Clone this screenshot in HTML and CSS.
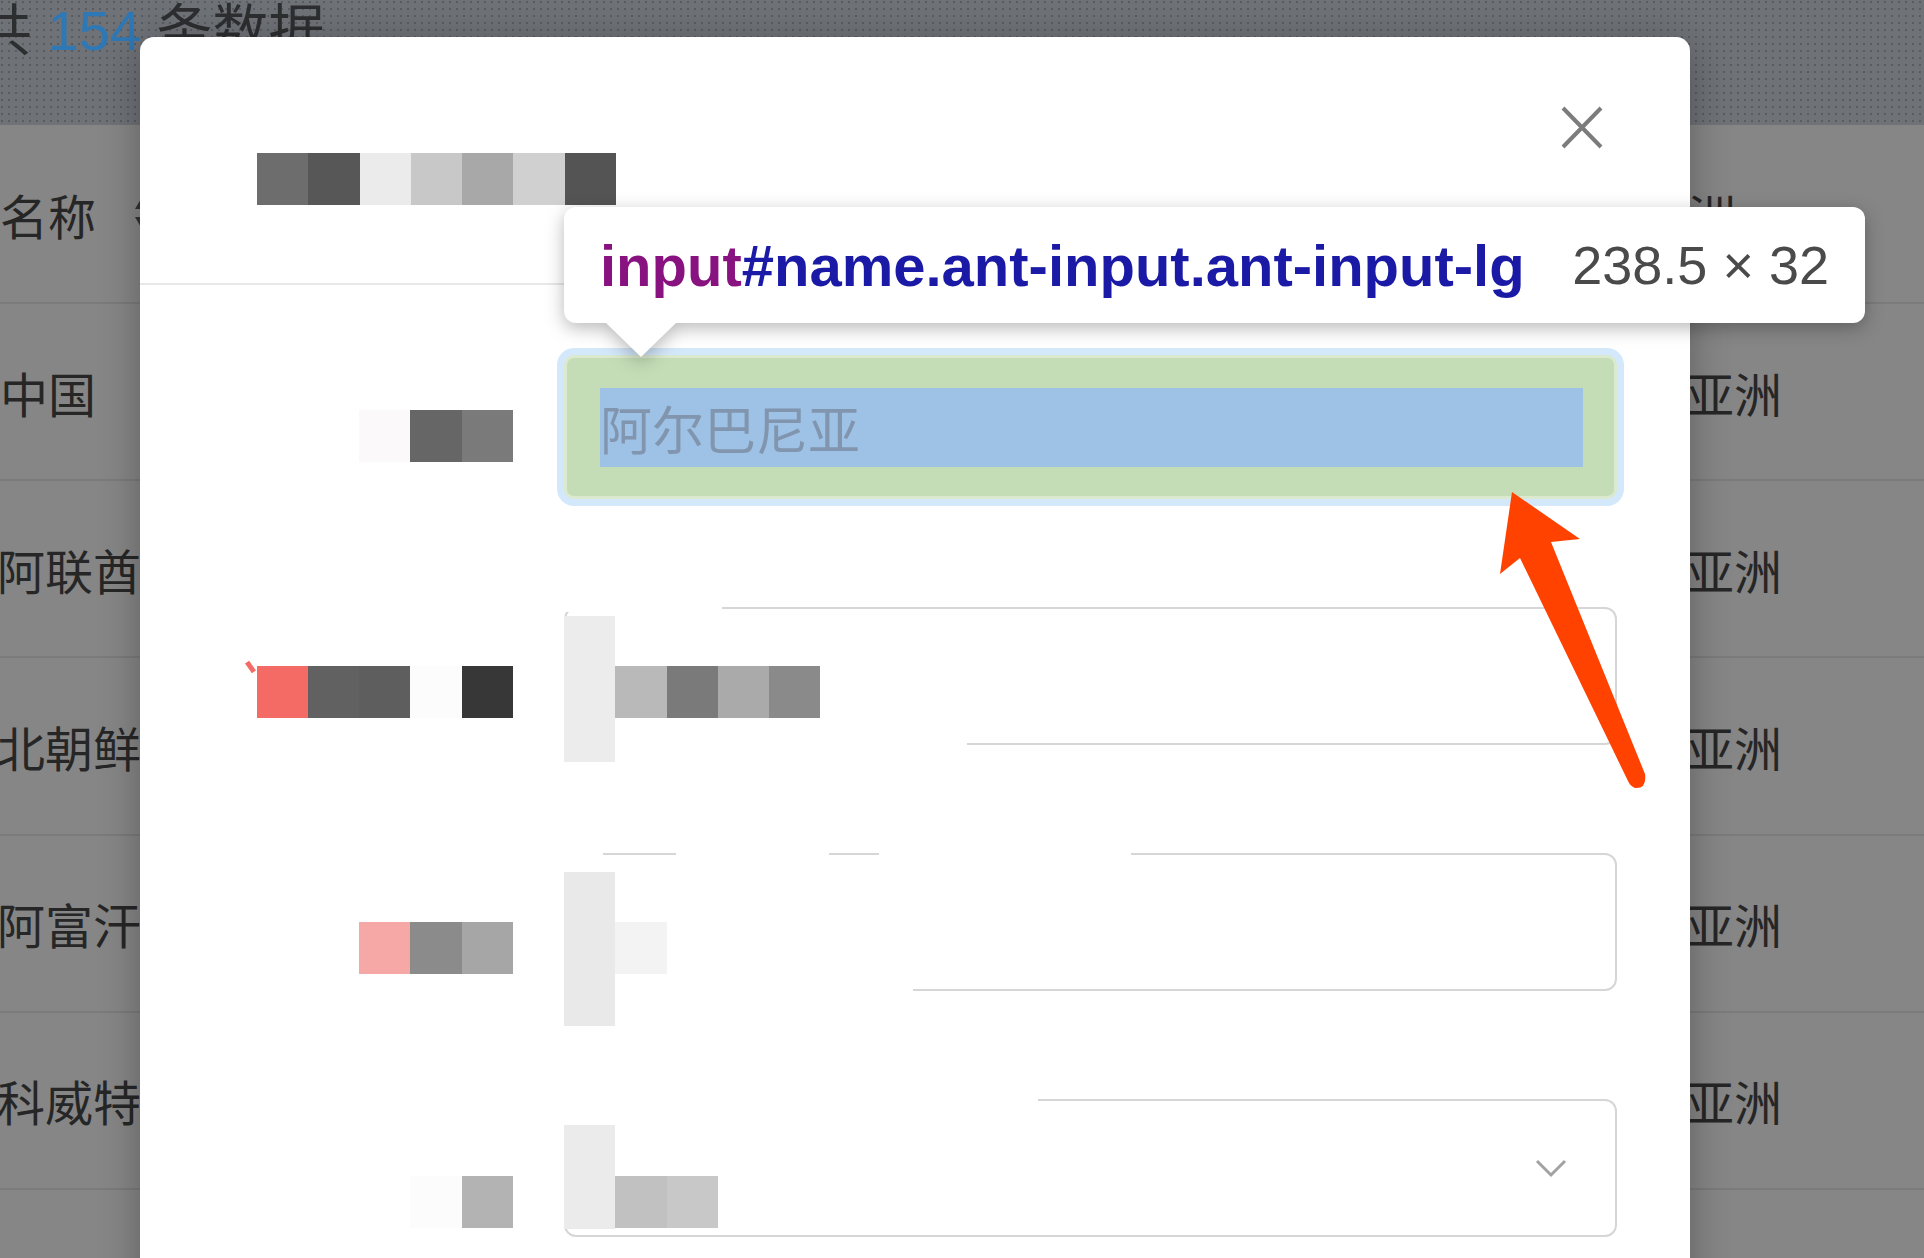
FILE: index.html
```html
<!DOCTYPE html>
<html lang="zh-CN">
<head>
<meta charset="utf-8">
<title>Modal form</title>
<link rel="stylesheet" href="styles.css">
</head>
<body>
<div class="page">
  <div class="topbar"><div class="count">共 <span class="num">154</span> 条数据</div></div>
  <div class="table">
    <div class="tr th">
      <div class="td name">名称<svg class="sorter" width="16" height="38" viewBox="0 0 16 38"><path d="M8 2 L15 14 L1 14 Z" fill="#333"/><path d="M1 22 L15 22 L8 34 Z" fill="#333"/></svg></div>
      <div class="td cont">大洲<span class="dot"></span></div>
    </div>
    <div class="tr"><div class="td name">中国</div><div class="td cont">亚洲</div></div>
    <div class="tr"><div class="td name shift">阿联酋</div><div class="td cont">亚洲</div></div>
    <div class="tr"><div class="td name shift">北朝鲜</div><div class="td cont">亚洲</div></div>
    <div class="tr"><div class="td name shift">阿富汗</div><div class="td cont">亚洲</div></div>
    <div class="tr"><div class="td name shift">科威特</div><div class="td cont">亚洲</div></div>
    <div class="tr"><div class="td name shift">阿曼</div><div class="td cont">亚洲</div></div>
  </div>
</div>

<div class="modal">
  <div class="modal-head">
    <div class="title">
      <span class="px g6d"></span><span class="px g57"></span><span class="px geb"></span><span class="px gc8"></span><span class="px ga8"></span><span class="px gd0"></span><span class="px g54"></span>
    </div>
    <svg class="close" width="44" height="45" viewBox="0 0 44 45"><path d="M3 3 L41 42 M41 3 L3 42" stroke="#7c7c7c" stroke-width="4" fill="none"/></svg>
  </div>
  <div class="modal-body">
    <div class="frow r1">
      <div class="label"><span class="px gfa"></span><span class="px g66"></span><span class="px g7a"></span></div>
      <div class="field">
        <div class="input focus"><div class="content">阿尔巴尼亚</div></div>
      </div>
    </div>
    <div class="frow r2">
      <div class="label"><span class="px red"></span><span class="px g61"></span><span class="px g5f"></span><span class="px gfc"></span><span class="px g37"></span></div>
      <div class="field">
        <div class="input"></div>
        <span class="ov cover c1"></span>
        <span class="ov cover c2"></span>
        <span class="ov vblock"></span>
        <span class="ov blocks"><span class="px gb9"></span><span class="px g7a"></span><span class="px gaa"></span><span class="px g8a"></span></span>
      </div>
    </div>
    <div class="frow r3">
      <div class="label"><span class="px pink"></span><span class="px g8b"></span><span class="px ga6"></span></div>
      <div class="field">
        <div class="input"></div>
        <span class="ov cover c1"></span>
        <span class="ov cover c2"></span>
        <span class="ov cover c3"></span>
        <span class="ov cover c4"></span>
        <span class="ov cover c5"></span>
        <span class="ov vblock"></span>
        <span class="ov blocks"><span class="px gf3"></span></span>
      </div>
    </div>
    <div class="frow r4">
      <div class="label"><span class="px gfc"></span><span class="px gb3"></span></div>
      <div class="field">
        <div class="input select">
          <svg class="chev" width="32" height="20" viewBox="0 0 32 20"><path d="M2 3 L16 17 L30 3" stroke="#a2a2a2" stroke-width="3" fill="none"/></svg>
        </div>
        <span class="ov cover c1"></span>
        <span class="ov cover c4"></span>
        <span class="ov vblock"></span>
        <span class="ov blocks"><span class="px gc1"></span><span class="px gc8"></span></span>
      </div>
    </div>
  </div>
</div>

<div class="tip">
  <span class="sel"><span class="tag">input</span>#name.ant-input.ant-input-lg</span>
  <span class="dim">238.5 × 32</span>
</div>

<svg class="annot" width="1924" height="1258" viewBox="0 0 1924 1258">
  <path d="M1512 492 L1580 539 L1551 542 L1645 774 Q1647 789 1635 788 Q1630 786 1628 781 L1520 558 L1500 574 Z" fill="#ff4200"/>
</svg>
</body>
</html>
```
FILE: styles.css
```css
* { box-sizing: border-box; }
html, body { margin: 0; padding: 0; }
body {
  width: 1924px;
  height: 1258px;
  overflow: hidden;
  position: relative;
  background: #868686;
  font-family: "Liberation Sans", "Noto Sans CJK SC", sans-serif;
}

/* ---------- page under the mask ---------- */
.topbar {
  height: 125px;
  background-color: #6f7277;
  background-image: radial-gradient(circle at 2px 2px, rgba(40, 42, 46, 0.3) 1px, transparent 1.6px);
  background-size: 7px 7px;
  overflow: hidden;
}
.count {
  font-size: 56px;
  line-height: 56px;
  padding-top: 3px;
  margin-left: -24px;
  color: #2d2e30;
  white-space: nowrap;
}
.count .num { color: #2f78b6; }

.tr {
  display: flex;
  align-items: center;
  height: 177.2px;
  border-bottom: 2px solid #7b7b7b;
  font-family: "Noto Sans CJK SC", sans-serif;
  font-size: 48px;
  line-height: 1;
  color: #262626;
  white-space: nowrap;
}
.tr.th { height: 179px; }
.td.name {
  width: 1686px;
  flex: none;
  display: flex;
  align-items: center;
}
.td.name.shift { margin-left: -3px; width: 1689px; }
.td.cont { display: flex; align-items: center; }
.th .cont { margin-left: -46px; }
.sorter { margin-left: 38px; flex: none; }
.dot {
  display: block;
  width: 8px;
  height: 8px;
  margin-left: 46px;
  margin-top: 14px;
  border-radius: 50%;
  background: #333;
}

/* ---------- modal ---------- */
.modal {
  position: absolute;
  left: 140px;
  top: 37px;
  width: 1550px;
  height: 1260px;
  background: #fff;
  border-radius: 14px;
  box-shadow: 0 8px 40px rgba(0, 0, 0, 0.3);
}
.modal-head {
  height: 248px;
  border-bottom: 2px solid #e8e8e8;
  display: flex;
  justify-content: space-between;
  align-items: flex-start;
  padding-left: 117px;
  padding-right: 86px;
}
.title { display: flex; margin-top: 116px; }
.close { margin-top: 68px; flex: none; }

.px { display: block; width: 51.3px; height: 52px; flex: none; }
.g6d { background: #6d6d6d; }
.g57 { background: #575757; }
.geb { background: #ebebeb; }
.gc8 { background: #c8c8c8; }
.ga8 { background: #a8a8a8; }
.gd0 { background: #d0d0d0; }
.g54 { background: #545454; }
.gfa { background: #fbf9f9; }
.g66 { background: #666666; }
.g7a { background: #7a7a7a; }
.g61 { background: #616161; }
.g5f { background: #5e5e5e; }
.gfc { background: #fcfcfc; }
.g37 { background: #373737; }
.gb9 { background: #b9b9b9; }
.gaa { background: #aaaaaa; }
.g8a { background: #8a8a8a; }
.g8b { background: #8b8b8b; }
.ga6 { background: #a6a6a6; }
.gf3 { background: #f3f3f3; }
.gb3 { background: #b3b3b3; }
.gc1 { background: #c1c1c1; }
.red { background: #f46a64; position: relative; }
.red::before {
  content: "";
  position: absolute;
  left: -9px;
  top: -5px;
  width: 5px;
  height: 12px;
  background: #f46a64;
  transform: rotate(-35deg);
}
.pink { background: #f6a8a6; }

.modal-body { padding-top: 70px; }
.frow { display: flex; margin-bottom: 108px; }
.frow.r4 { margin-top: 3px; }
.label {
  width: 424px;
  flex: none;
  display: flex;
  justify-content: flex-end;
  padding-right: 51px;
  align-self: flex-start;
}
.r1 .label { margin-top: 55px; }
.r2 .label { margin-top: 59px; }
.r3 .label { margin-top: 69px; }
.r4 .label { margin-top: 77px; }

.field { width: 1053px; flex: none; position: relative; }
.input {
  height: 138px;
  border: 2.5px solid #d6d6d6;
  border-radius: 12px;
  background: #fff;
}
.input.focus {
  height: 144px;
  border: 3px solid #dbe9cf;
  border-radius: 10px;
  background: #c4ddb7;
  box-shadow: 0 0 0 7px #d3e8fb;
  padding: 30px 31px 29px 33px;
}
.content {
  height: 79px;
  background: #9ec1e6;
  display: flex;
  align-items: center;
  font-family: "Noto Sans CJK SC", sans-serif;
  font-size: 52px;
  line-height: 1;
  color: #8196ae;
  white-space: nowrap;
}
.select {
  display: flex;
  align-items: center;
  justify-content: flex-end;
  padding-right: 48px;
}
.chev { flex: none; }

/* mosaic / pixelation patches lying over the inputs */
.ov { position: absolute; display: block; }
.cover { background: #fff; height: 9px; }
.vblock { left: 0; width: 51.3px; }
.blocks { left: 51.3px; display: flex; }

.r2 .c1 { left: -4px; top: -4px; width: 162px; }
.r2 .c2 { left: 51px; bottom: -4px; width: 352px; }
.r2 .vblock { top: 9px; height: 146px; background: #ececec; }
.r2 .blocks { top: 59px; }

.r3 .c1 { left: -4px; top: -4px; width: 43px; }
.r3 .c2 { left: 112px; top: -4px; width: 153px; }
.r3 .c3 { left: 315px; top: -4px; width: 252px; }
.r3 .c4 { left: -4px; top: 0; width: 9px; height: 20px; }
.r3 .c5 { left: -4px; bottom: -4px; width: 353px; }
.r3 .vblock { top: 19px; height: 154px; background: #e9e9e9; }
.r3 .blocks { top: 69px; }

.r4 .c1 { left: -4px; top: -4px; width: 478px; }
.r4 .c4 { left: -4px; top: 0; width: 9px; height: 27px; }
.r4 .vblock { top: 26px; height: 104px; background: #ebebeb; }
.r4 .blocks { top: 77px; }

/* ---------- devtools inspect tooltip ---------- */
.tip {
  position: absolute;
  left: 564px;
  top: 207px;
  width: 1301px;
  height: 116px;
  background: #fff;
  border-radius: 12px;
  display: flex;
  align-items: center;
  padding: 0 36px;
  filter: drop-shadow(0 5px 9px rgba(0, 0, 0, 0.28));
  font-family: "Liberation Sans", sans-serif;
  white-space: nowrap;
}
.tip::after {
  content: "";
  position: absolute;
  left: 42px;
  top: 100%;
  border-left: 35px solid transparent;
  border-right: 35px solid transparent;
  border-top: 34px solid #fff;
}
.sel { font-size: 58px; font-weight: 700; color: #1a1aa6; }
.sel .tag { color: #881280; }
.dim { font-size: 54px; color: #4a4a4a; margin-left: auto; }

.annot {
  position: absolute;
  left: 0;
  top: 0;
  pointer-events: none;
}
```
